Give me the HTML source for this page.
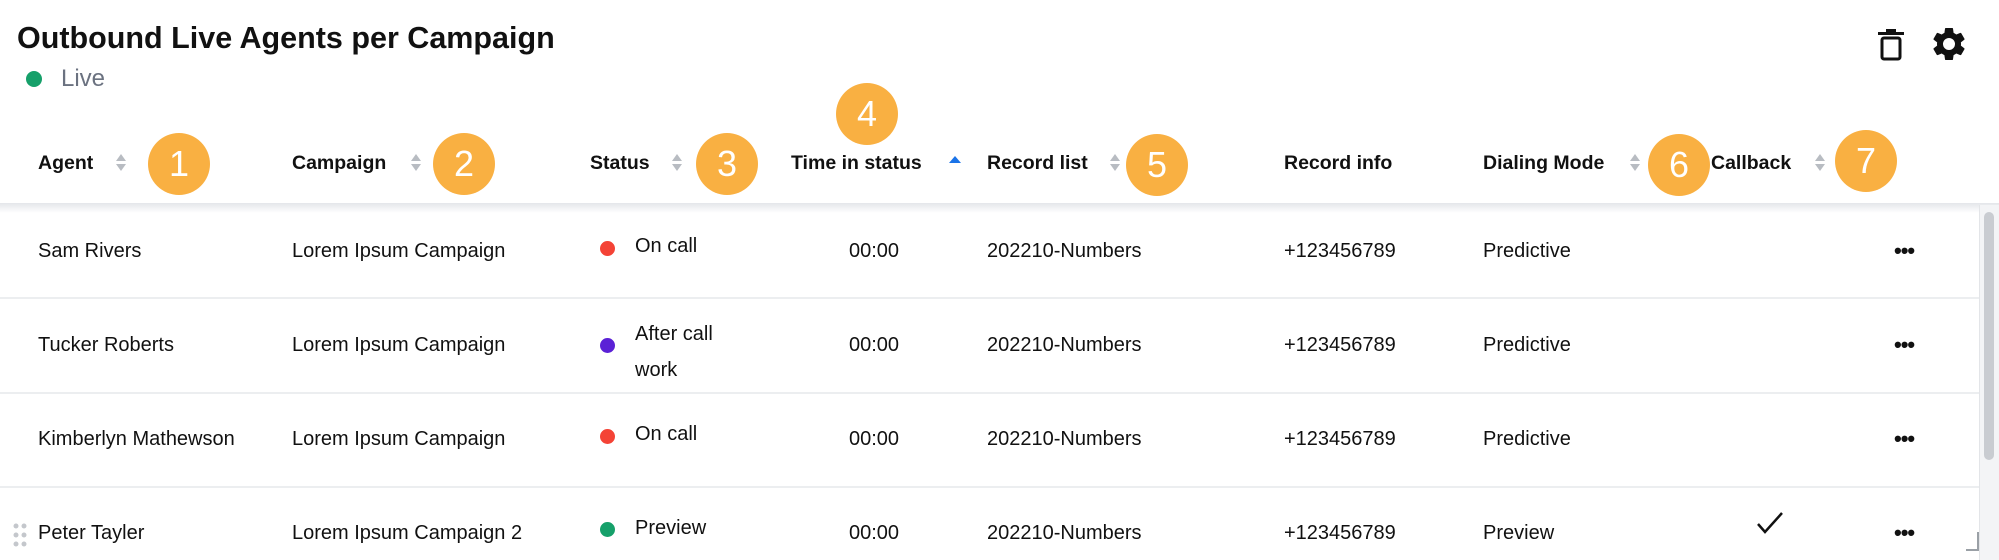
<!DOCTYPE html>
<html><head><meta charset="utf-8"><style>
*{margin:0;padding:0;box-sizing:border-box}
body{width:1999px;height:560px;background:#fff;font-family:"Liberation Sans",Arial,sans-serif;color:#111;position:relative;overflow:hidden}
.a{position:absolute;white-space:nowrap}
.h{font-weight:bold;font-size:19.5px;top:152px}
.c{font-size:20px}
.sort{position:absolute;width:10px;height:20px;top:153px}
.sort:before{content:"";position:absolute;left:0;top:1px;border-left:5px solid transparent;border-right:5px solid transparent;border-bottom:7px solid #b8bcc2}
.sort:after{content:"";position:absolute;left:0;top:11px;border-left:5px solid transparent;border-right:5px solid transparent;border-top:7px solid #b8bcc2}
.b{position:absolute;width:62px;height:62px;border-radius:50%;background:#f9b042;color:#fff;font-size:36px;text-align:center;line-height:62px}
.dot{position:absolute;width:15px;height:15px;border-radius:50%}
.line{position:absolute;left:0;width:1979px;height:2px;background:#eceef0}
.more{position:absolute;font-size:22px;font-weight:bold;letter-spacing:-1px}
</style></head><body>
<div class="a" style="left:17px;top:21px;font-size:30.5px;font-weight:bold">Outbound Live Agents per Campaign</div>
<div class="dot" style="left:26px;top:71px;width:16px;height:16px;background:#16a06a"></div>
<div class="a" style="left:61px;top:65px;font-size:24px;color:#6b7280">Live</div>
<svg class="a" style="left:1876px;top:27px" width="30" height="34" viewBox="0 0 30 34"><path d="M10 2h10v3h8v3H2V5h8z" fill="#111"/><rect x="6" y="11" width="18" height="21" rx="2" fill="none" stroke="#111" stroke-width="3"/></svg>
<svg class="a" style="left:1929px;top:24px" width="40" height="40" viewBox="0 0 24 24"><path fill="#111" d="M19.14 12.94c.04-.3.06-.61.06-.94s-.02-.64-.07-.94l2.03-1.58a.49.49 0 0 0 .12-.61l-1.92-3.32a.49.49 0 0 0-.59-.22l-2.39.96c-.5-.38-1.03-.7-1.62-.94l-.36-2.540a.48.48 0 0 0-.48-.41h-3.84c-.24 0-.43.17-.47.41l-.36 2.54c-.59.24-1.130.57-1.62.94l-2.39-.96a.48.48 0 0 0-.59.22L2.74 8.87c-.12.21-.08.47.12.61l2.03 1.58c-.05.3-.09.63-.09.94s.02.64.07.94l-2.03 1.58a.49.49 0 0 0-.12.61l1.92 3.32c.12.22.37.29.59.22l2.39-.96c.5.38 1.03.7 1.62.94l.36 2.54c.05.24.24.41.48.41h3.84c.24 0 .44-.17.47-.41l.36-2.54c.59-.24 1.13-.56 1.62-.94l2.39.96c.22.08.47 0 .59-.22l1.92-3.32c.12-.22.07-.47-.12-.61l-2.010-1.58zM12 15.6A3.6 3.6 0 1 1 12 8.4a3.6 3.6 0 0 1 0 7.2z"/></svg>

<div class="a h" style="left:38px">Agent</div><div class="sort" style="left:116px"></div>
<div class="a h" style="left:292px">Campaign</div><div class="sort" style="left:411px"></div>
<div class="a h" style="left:590px">Status</div><div class="sort" style="left:672px"></div>
<div class="a h" style="left:791px">Time in status</div>
<div class="a" style="left:949px;top:156px;border-left:6px solid transparent;border-right:6px solid transparent;border-bottom:7px solid #1a73e8"></div>
<div class="a h" style="left:987px">Record list</div><div class="sort" style="left:1110px"></div>
<div class="a h" style="left:1284px">Record info</div>
<div class="a h" style="left:1483px">Dialing Mode</div><div class="sort" style="left:1630px"></div>
<div class="a h" style="left:1711px">Callback</div><div class="sort" style="left:1815px"></div>

<div style="position:absolute;left:0;top:203px;width:1999px;height:10px;background:linear-gradient(#e4e6ea,#fff)"></div>
<div style="position:absolute;left:1979px;top:205px;width:20px;height:355px;background:#f3f4f6;border-left:1px solid #e3e5e8"></div>
<div style="position:absolute;left:1984px;top:212px;width:10px;height:248px;border-radius:5px;background:#c9ccd1"></div>

<div class="line" style="top:297px"></div>
<div class="line" style="top:392px"></div>
<div class="line" style="top:486px"></div>

<div class="a c" style="left:38px;top:240px">Sam Rivers</div>
<div class="a c" style="left:292px;top:240px">Lorem Ipsum Campaign</div>
<div class="dot" style="left:600px;top:241px;background:#f44336"></div>
<div class="a c" style="left:635px;top:235px">On call</div>
<div class="a c" style="left:849px;top:240px">00:00</div>
<div class="a c" style="left:987px;top:240px">202210-Numbers</div>
<div class="a c" style="left:1284px;top:240px">+123456789</div>
<div class="a c" style="left:1483px;top:240px">Predictive</div>
<div class="more" style="left:1894px;top:238px">•••</div>

<div class="a c" style="left:38px;top:334px">Tucker Roberts</div>
<div class="a c" style="left:292px;top:334px">Lorem Ipsum Campaign</div>
<div class="dot" style="left:600px;top:338px;background:#5b21d6"></div>
<div class="a c" style="left:635px;top:316px;line-height:36px">After call<br>work</div>
<div class="a c" style="left:849px;top:334px">00:00</div>
<div class="a c" style="left:987px;top:334px">202210-Numbers</div>
<div class="a c" style="left:1284px;top:334px">+123456789</div>
<div class="a c" style="left:1483px;top:334px">Predictive</div>
<div class="more" style="left:1894px;top:332px">•••</div>

<div class="a c" style="left:38px;top:428px">Kimberlyn Mathewson</div>
<div class="a c" style="left:292px;top:428px">Lorem Ipsum Campaign</div>
<div class="dot" style="left:600px;top:429px;background:#f44336"></div>
<div class="a c" style="left:635px;top:423px">On call</div>
<div class="a c" style="left:849px;top:428px">00:00</div>
<div class="a c" style="left:987px;top:428px">202210-Numbers</div>
<div class="a c" style="left:1284px;top:428px">+123456789</div>
<div class="a c" style="left:1483px;top:428px">Predictive</div>
<div class="more" style="left:1894px;top:426px">•••</div>

<svg class="a" style="left:13px;top:523px" width="14" height="24"><g fill="#c4c7cc"><circle cx="3" cy="3" r="2.5"/><circle cx="11" cy="3" r="2.5"/><circle cx="3" cy="12" r="2.5"/><circle cx="11" cy="12" r="2.5"/><circle cx="3" cy="21" r="2.5"/><circle cx="11" cy="21" r="2.5"/></g></svg>
<div class="a c" style="left:38px;top:522px">Peter Tayler</div>
<div class="a c" style="left:292px;top:522px">Lorem Ipsum Campaign 2</div>
<div class="dot" style="left:600px;top:522px;background:#16a06a"></div>
<div class="a c" style="left:635px;top:517px">Preview</div>
<div class="a c" style="left:849px;top:522px">00:00</div>
<div class="a c" style="left:987px;top:522px">202210-Numbers</div>
<div class="a c" style="left:1284px;top:522px">+123456789</div>
<div class="a c" style="left:1483px;top:522px">Preview</div>
<svg class="a" style="left:1755px;top:511px" width="30" height="24"><path d="M3 13l7 8L27 2" fill="none" stroke="#111" stroke-width="2.5"/></svg>
<div class="more" style="left:1894px;top:520px">•••</div>
<svg class="a" style="left:1966px;top:532px" width="14" height="20"><path d="M12 0v18H0" fill="none" stroke="#9aa0a6" stroke-width="2"/></svg>

<div class="b" style="left:148px;top:133px">1</div>
<div class="b" style="left:433px;top:133px">2</div>
<div class="b" style="left:696px;top:133px">3</div>
<div class="b" style="left:836px;top:83px">4</div>
<div class="b" style="left:1126px;top:134px">5</div>
<div class="b" style="left:1648px;top:134px">6</div>
<div class="b" style="left:1835px;top:130px">7</div>
</body></html>
